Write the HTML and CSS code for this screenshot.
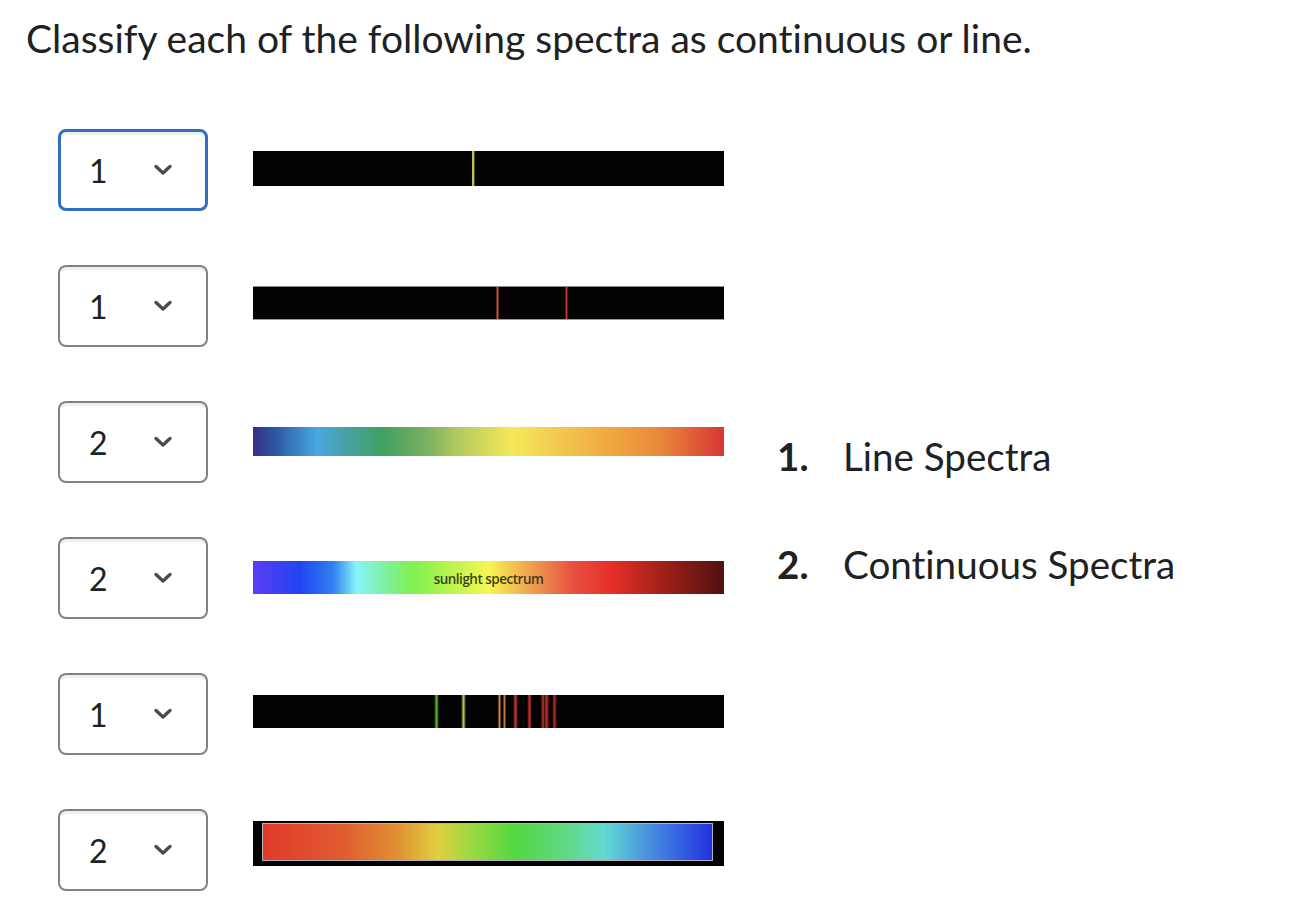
FILE: index.html
```html
<!DOCTYPE html>
<html lang="en">
<head>
<meta charset="utf-8">
<title>Classify spectra</title>
<link rel="stylesheet" href="styles.css">
</head>
<body>
<h1 class="title">Classify each of the following spectra as continuous or line.</h1>
<div class="layout">
  <div class="rows">
    <div class="row">
      <div class="select select--focus"><span class="select__value">1</span><svg class="chev" viewBox="0 0 20 12" width="20" height="12"><polyline points="3,2.5 10,9 17,2.5"/></svg></div>
      <svg class="bar bar--a" width="471" height="35" viewBox="0 0 471 35">
        <rect width="471" height="35" fill="#030303"/>
        <rect x="219" y="0" width="2.4" height="35" fill="#c4bc4c"/>
      </svg>
    </div>
    <div class="row">
      <div class="select"><span class="select__value">1</span><svg class="chev" viewBox="0 0 20 12" width="20" height="12"><polyline points="3,2.5 10,9 17,2.5"/></svg></div>
      <svg class="bar bar--b" width="471" height="34" viewBox="0 0 471 34">
        <rect width="471" height="34" fill="#030303"/>
        <rect width="471" height="1" fill="#8a8a8a"/>
        <rect y="33" width="471" height="1" fill="#9a9a9a"/>
        <rect x="243.5" y="1" width="2" height="32" fill="#d2532e"/>
        <rect x="312.5" y="1" width="2" height="32" fill="#c4322c"/>
      </svg>
    </div>
    <div class="row">
      <div class="select"><span class="select__value">2</span><svg class="chev" viewBox="0 0 20 12" width="20" height="12"><polyline points="3,2.5 10,9 17,2.5"/></svg></div>
      <div class="bar bar--c"></div>
    </div>
    <div class="row">
      <div class="select"><span class="select__value">2</span><svg class="chev" viewBox="0 0 20 12" width="20" height="12"><polyline points="3,2.5 10,9 17,2.5"/></svg></div>
      <div class="bar bar--d"><span class="bar__label">sunlight spectrum</span></div>
    </div>
    <div class="row">
      <div class="select"><span class="select__value">1</span><svg class="chev" viewBox="0 0 20 12" width="20" height="12"><polyline points="3,2.5 10,9 17,2.5"/></svg></div>
      <svg class="bar bar--e" width="471" height="33" viewBox="0 0 471 33">
        <rect width="471" height="33" fill="#030303"/>
        <rect x="181.5" width="4" height="33" fill="#5fa832" opacity="0.35"/>
        <rect x="182.5" width="2" height="33" fill="#5fa832"/>
        <rect x="208.5" width="4" height="33" fill="#b4c444" opacity="0.35"/>
        <rect x="209.5" width="2" height="33" fill="#b4c444"/>
        <rect x="245.5" width="2" height="33" fill="#d08a3a"/>
        <rect x="250.5" width="2" height="33" fill="#c27634"/>
        <rect x="260.5" width="4" height="33" fill="#c2342a" opacity="0.4"/>
        <rect x="261.5" width="2" height="33" fill="#c2342a"/>
        <rect x="274.5" width="4" height="33" fill="#bd2f28" opacity="0.4"/>
        <rect x="275.5" width="2" height="33" fill="#bd2f28"/>
        <rect x="288" width="8" height="33" fill="#8a2420" opacity="0.5"/>
        <rect x="289" width="2" height="33" fill="#9a2a24"/>
        <rect x="292.5" width="2" height="33" fill="#b2322a"/>
        <rect x="299.5" width="4" height="33" fill="#a02a24" opacity="0.4"/>
        <rect x="300.5" width="2" height="33" fill="#a02a24"/>
      </svg>
    </div>
    <div class="row">
      <div class="select"><span class="select__value">2</span><svg class="chev" viewBox="0 0 20 12" width="20" height="12"><polyline points="3,2.5 10,9 17,2.5"/></svg></div>
      <div class="bar bar--f"><div class="bar__inner"></div></div>
    </div>
  </div>
  <ol class="legend">
    <li class="legend__item"><span class="legend__num">1.</span><span class="legend__text">Line Spectra</span></li>
    <li class="legend__item"><span class="legend__num">2.</span><span class="legend__text">Continuous Spectra</span></li>
  </ol>
</div>
</body>
</html>
```

FILE: styles.css
```css
html, body {
  margin: 0;
  padding: 0;
  background: #ffffff;
}

body {
  font-family: Lato, "Open Sans", sans-serif;
  font-variant-ligatures: none;
  color: #202122;
  padding: 15px 0 0 26px;
}

.title {
  margin: 0;
  font-size: 39px;
  line-height: 46px;
  font-weight: 400;
  color: #202122;
}

.layout {
  display: flex;
  align-items: flex-start;
  margin-top: 68px;
  padding-left: 32px;
}

.rows {
  display: flex;
  flex-direction: column;
  gap: 54px;
}

.row {
  display: flex;
  align-items: flex-start;
  gap: 45px;
  height: 82px;
}

.select {
  box-sizing: border-box;
  width: 150px;
  height: 82px;
  border: 2px solid #808386;
  border-radius: 8px;
  background: #ffffff;
  box-shadow: inset 0 3px 0 0 rgba(185, 194, 208, 0.25);
  display: flex;
  align-items: center;
  padding: 0 33px 0 29px;
}

.select--focus {
  border: 3px solid #3170c0;
  padding: 0 32px 0 28px;
}

.select__value {
  font-size: 32px;
  line-height: 1;
  color: #202122;
  padding-top: 2px;
}

.chev {
  margin-left: auto;
  fill: none;
  stroke: #4b4e51;
  stroke-width: 3.4;
  stroke-linecap: round;
  stroke-linejoin: round;
}

.bar {
  display: block;
  width: 471px;
  flex: none;
}

.bar--a { margin-top: 22px; }
.bar--b { margin-top: 21px; }

.bar--c {
  margin-top: 26px;
  height: 29px;
  background: linear-gradient(to right,
    #3a2e86 0%,
    #2c5aa4 5%,
    #4aa8e0 13.6%,
    #48a0a2 20%,
    #40a060 27.6%,
    #7cb060 37%,
    #b0c860 43%,
    #f5e858 55%,
    #f1c850 65%,
    #f0aa42 75%,
    #e88a3a 86%,
    #d83636 100%);
}

.bar--d {
  margin-top: 24px;
  height: 33px;
  display: flex;
  align-items: center;
  justify-content: center;
  background: linear-gradient(to right,
    #5a3ef2 0%,
    #2244f0 10%,
    #3080f0 17%,
    #86f4f8 22%,
    #80f0b0 27%,
    #80f050 34%,
    #f6f652 50%,
    #f0a050 59%,
    #e85040 68%,
    #e63028 76%,
    #a02018 87%,
    #501010 100%);
}

.bar__label {
  font-family: "Open Sans", Lato, sans-serif;
  font-size: 13.5px;
  font-weight: 600;
  letter-spacing: -0.5px;
  color: rgba(36, 44, 16, 0.88);
  padding-top: 3px;
}

.bar--e { margin-top: 22px; }

.bar--f {
  box-sizing: border-box;
  margin-top: 12px;
  height: 45px;
  background: #030303;
  padding: 2px 11px 5px 9px;
}

.bar__inner {
  height: 100%;
  box-sizing: border-box;
  border: 1px solid #b8b0c0;
  background: linear-gradient(to right,
    #e03a2a 0%,
    #e05c30 18%,
    #e09032 30%,
    #e0d040 39%,
    #a0d842 46%,
    #52d840 56%,
    #62d890 69%,
    #62dad2 76%,
    #4282e0 88%,
    #2232e0 100%);
}

.legend {
  list-style: none;
  margin: 0 0 0 53px;
  padding: 304px 0 0 0;
  display: flex;
  flex-direction: column;
  gap: 62px;
}

.legend__item {
  display: flex;
  font-size: 38.6px;
  line-height: 1.2;
  color: #202122;
}

.legend__num {
  font-weight: 700;
  width: 66px;
  flex: none;
}
```
